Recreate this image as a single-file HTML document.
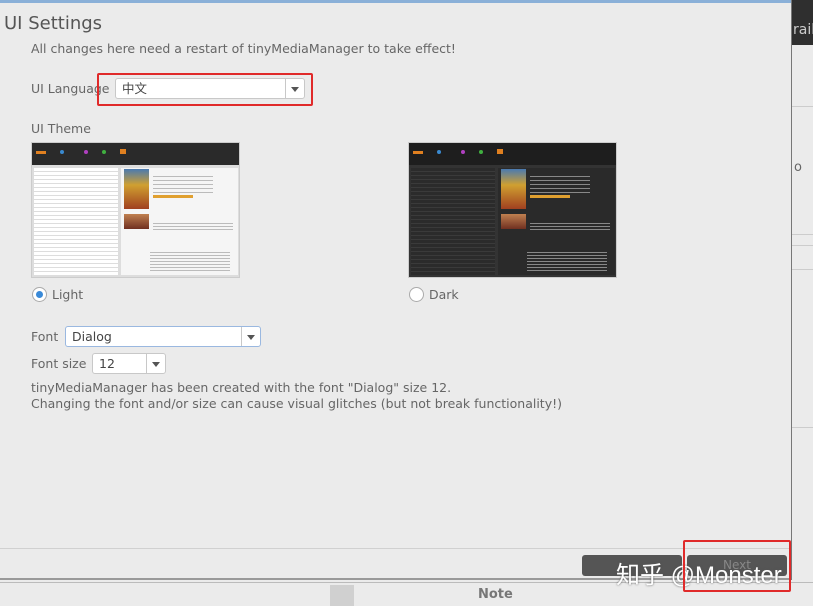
<!DOCTYPE html>
<html><head><meta charset="utf-8"><style>
*{margin:0;padding:0;box-sizing:border-box}
body{width:813px;height:606px;overflow:hidden;background:#ebebeb;font-family:"DejaVu Sans","Liberation Sans","Noto Sans CJK SC",sans-serif;color:#555;position:relative}
.a{position:absolute}
.t{font-size:12.5px;color:#666;white-space:nowrap}
.combo{position:absolute;background:#fff;border:1px solid #c8c8c8;border-radius:3px;font-size:12.5px;color:#444;padding-left:6px;line-height:19px}
.combo .arr{position:absolute;right:0;top:0;bottom:0;width:19px;border-left:1px solid #c8c8c8}
.combo .arr:after{content:"";position:absolute;left:5px;top:8px;border-left:4px solid transparent;border-right:4px solid transparent;border-top:5px solid #555}
.red{position:absolute;border:2px solid #e02a2a;border-radius:2px}
.list{background:repeating-linear-gradient(#fff 0 3px,#ddd 3px 4px)}
.dlist{background:repeating-linear-gradient(#2b2b2b 0 3px,#3a3a3a 3px 4px)}
.radio{position:absolute;width:15px;height:15px;border-radius:50%;border:1px solid #aaa;background:#fff}
</style></head><body>
<div class="a" style="left:0;top:0;width:792px;height:3px;background:#8ab0d8"></div>
<div class="a" style="left:791px;top:0;width:1px;height:580px;background:#777"></div>
<div class="a" style="left:792px;top:0;width:21px;height:45px;background:#2f2f2f"></div>
<div class="a" style="left:793px;top:22px;color:#ccc;font-size:14px">rail</div>
<div class="a" style="left:792px;top:106px;width:21px;height:1px;background:#ccc"></div>
<div class="a" style="left:792px;top:234px;width:21px;height:1px;background:#ccc"></div>
<div class="a" style="left:792px;top:245px;width:21px;height:1px;background:#ccc"></div>
<div class="a" style="left:792px;top:269px;width:21px;height:1px;background:#ccc"></div>
<div class="a" style="left:792px;top:427px;width:21px;height:1px;background:#ccc"></div>
<div class="a" style="left:794px;top:160px;font-size:13px;color:#666">o</div>

<div class="a" style="left:4px;top:13px;font-size:18px;color:#555">UI Settings</div>
<div class="a t" style="left:31px;top:41px">All changes here need a restart of tinyMediaManager to take effect!</div>
<div class="a t" style="left:31px;top:81px">UI Language</div>
<div class="combo" style="left:115px;top:78px;width:190px;height:21px">中文<div class="arr"></div></div>
<div class="red" style="left:97px;top:73px;width:216px;height:33px"></div>
<div class="a t" style="left:31px;top:121px">UI Theme</div>

<div class="a" style="left:31px;top:142px;width:209px;height:136px;background:#ddd;border:1px solid #ccc">
 <div class="a" style="left:0;top:0;width:207px;height:22px;background:#2a2a2a"></div>
 <div class="a" style="left:4px;top:8px;width:10px;height:3px;background:#e08020"></div>
 <div class="a" style="left:28px;top:7px;width:4px;height:4px;background:#3a8ad0;border-radius:50%"></div>
 <div class="a" style="left:52px;top:7px;width:4px;height:4px;background:#b040c0;border-radius:50%"></div>
 <div class="a" style="left:70px;top:7px;width:4px;height:4px;background:#40b040;border-radius:50%"></div>
 <div class="a" style="left:88px;top:6px;width:6px;height:5px;background:#e08020"></div>
 <div class="a list" style="left:2px;top:25px;width:84px;height:107px"></div>
 <div class="a" style="left:89px;top:25px;width:117px;height:107px;background:#f5f5f5"></div>
 <div class="a" style="left:92px;top:26px;width:25px;height:40px;background:linear-gradient(#4a7ab0,#d0a030 40%,#a04020)"></div>
 <div class="a" style="left:92px;top:71px;width:25px;height:15px;background:linear-gradient(#c08050,#703020)"></div>
 <div class="a" style="left:121px;top:52px;width:40px;height:3px;background:#e0a030"></div>
 <div class="a" style="left:121px;top:30px;width:60px;height:20px;background:repeating-linear-gradient(#f5f5f5 0 3px,#bbb 3px 4px)"></div>
 <div class="a" style="left:121px;top:78px;width:80px;height:10px;background:repeating-linear-gradient(#f5f5f5 0 2px,#bbb 2px 3px)"></div>
 <div class="a" style="left:118px;top:107px;width:80px;height:22px;background:repeating-linear-gradient(#f5f5f5 0 2px,#bbb 2px 3px)"></div>
</div>
<div class="a" style="left:408px;top:142px;width:209px;height:136px;background:#333;border:1px solid #ccc">
 <div class="a" style="left:0;top:0;width:207px;height:22px;background:#1e1e1e"></div>
 <div class="a" style="left:4px;top:8px;width:10px;height:3px;background:#e08020"></div>
 <div class="a" style="left:28px;top:7px;width:4px;height:4px;background:#3a8ad0;border-radius:50%"></div>
 <div class="a" style="left:52px;top:7px;width:4px;height:4px;background:#b040c0;border-radius:50%"></div>
 <div class="a" style="left:70px;top:7px;width:4px;height:4px;background:#40b040;border-radius:50%"></div>
 <div class="a" style="left:88px;top:6px;width:6px;height:5px;background:#e08020"></div>
 <div class="a dlist" style="left:2px;top:25px;width:84px;height:107px"></div>
 <div class="a" style="left:89px;top:25px;width:117px;height:107px;background:#2a2a2a"></div>
 <div class="a" style="left:92px;top:26px;width:25px;height:40px;background:linear-gradient(#4a7ab0,#d0a030 40%,#a04020)"></div>
 <div class="a" style="left:92px;top:71px;width:25px;height:15px;background:linear-gradient(#c08050,#703020)"></div>
 <div class="a" style="left:121px;top:52px;width:40px;height:3px;background:#e0a030"></div>
 <div class="a" style="left:121px;top:30px;width:60px;height:20px;background:repeating-linear-gradient(#2a2a2a 0 3px,#888 3px 4px)"></div>
 <div class="a" style="left:121px;top:78px;width:80px;height:10px;background:repeating-linear-gradient(#2a2a2a 0 2px,#888 2px 3px)"></div>
 <div class="a" style="left:118px;top:107px;width:80px;height:22px;background:repeating-linear-gradient(#2a2a2a 0 2px,#888 2px 3px)"></div>
</div>

<div class="radio" style="left:32px;top:287px"><div class="a" style="left:3px;top:3px;width:7px;height:7px;border-radius:50%;background:#3a8ad8"></div></div>
<div class="a t" style="left:52px;top:287px">Light</div>
<div class="radio" style="left:409px;top:287px"></div>
<div class="a t" style="left:429px;top:287px">Dark</div>

<div class="a t" style="left:31px;top:329px">Font</div>
<div class="combo" style="left:65px;top:326px;width:196px;height:21px;border-color:#9ab8e0">Dialog<div class="arr"></div></div>
<div class="a t" style="left:31px;top:356px">Font size</div>
<div class="combo" style="left:92px;top:353px;width:74px;height:21px">12<div class="arr"></div></div>
<div class="a t" style="left:31px;top:380px">tinyMediaManager has been created with the font "Dialog" size 12.</div>
<div class="a t" style="left:31px;top:396px">Changing the font and/or size can cause visual glitches (but not break functionality!)</div>

<div class="a" style="left:0;top:548px;width:791px;height:1px;background:#d0d0d0"></div>
<div class="a" style="left:582px;top:555px;width:100px;height:21px;background:#555;border-radius:3px"></div>
<div class="a" style="left:687px;top:555px;width:100px;height:21px;background:#555;border-radius:3px;color:#888;font-size:12px;text-align:center;line-height:21px">Next</div>
<div class="a" style="left:0;top:578px;width:791px;height:2px;background:#999"></div>
<div class="a" style="left:0;top:582px;width:813px;height:1px;background:#bbb"></div>
<div class="a" style="left:330px;top:585px;width:24px;height:21px;background:#d0d0d0"></div>
<div class="a" style="left:478px;top:587px;font-size:13px;font-weight:bold;color:#777">Note</div>
<div class="a" style="left:616px;top:555px;font-size:24px;color:#fff;font-family:'Liberation Sans','Noto Sans CJK SC',sans-serif;text-shadow:0 0 2px #555">知乎 @Monster</div>
<div class="red" style="left:683px;top:540px;width:108px;height:52px"></div>
</body></html>
